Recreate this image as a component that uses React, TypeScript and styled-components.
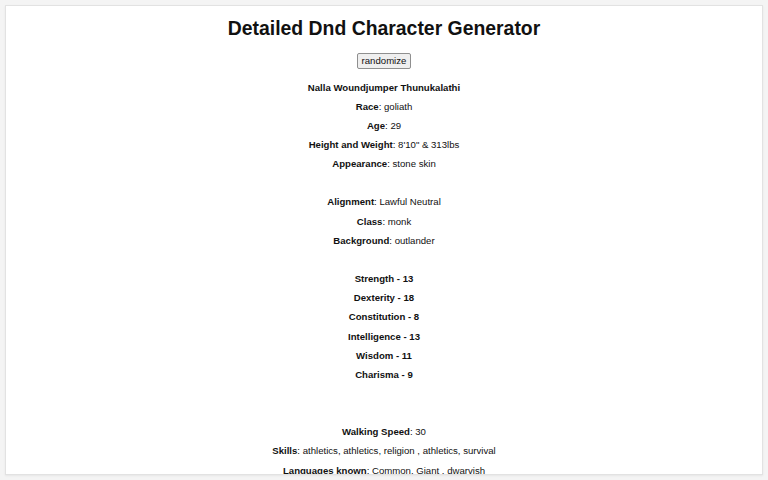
import styled, { createGlobalStyle } from 'styled-components';

const GlobalStyle = createGlobalStyle`
  html, body {
    margin: 0;
    padding: 0;
    background: #f4f4f4;
    font-family: "Liberation Sans", Arial, sans-serif;
    color: #111;
  }
`;

type Row = { label: string; value?: string } | null;

const character: Row[] = [
  { label: 'Nalla Woundjumper Thunukalathi' },
  { label: 'Race', value: 'goliath' },
  { label: 'Age', value: '29' },
  { label: 'Height and Weight', value: '8\'10" & 313lbs' },
  { label: 'Appearance', value: 'stone skin' },
  null,
  { label: 'Alignment', value: 'Lawful Neutral' },
  { label: 'Class', value: 'monk' },
  { label: 'Background', value: 'outlander' },
  null,
  { label: 'Strength - 13' },
  { label: 'Dexterity - 18' },
  { label: 'Constitution - 8' },
  { label: 'Intelligence - 13' },
  { label: 'Wisdom - 11' },
  { label: 'Charisma - 9' },
  null,
  null,
  { label: 'Walking Speed', value: '30' },
  { label: 'Skills', value: 'athletics, athletics, religion , athletics, survival' },
  { label: 'Languages known', value: 'Common, Giant , dwarvish' },
];

export default function App() {
  return (
    <>
      <GlobalStyle />
      <Page>
        <Card>
          <Title>Detailed Dnd Character Generator</Title>
          <Randomize>randomize</Randomize>
          <Sheet>
            {character.map((row, i) =>
              row ? (
                <Line key={i}>
                  <b>{row.label}</b>
                  {row.value !== undefined && <>: {row.value}</>}
                </Line>
              ) : (
                <Line key={i}>&nbsp;</Line>
              )
            )}
          </Sheet>
        </Card>
      </Page>
    </>
  );
}

const Page = styled.main`
  padding: 5px;
  height: 100vh;
  box-sizing: border-box;
`;

const Card = styled.section`
  background: #fff;
  height: 100%;
  box-sizing: border-box;
  border: 1px solid #e2e2e2;
  box-shadow: 0 1px 2px rgba(0, 0, 0, 0.06);
  overflow: hidden;
  display: flex;
  flex-direction: column;
  align-items: center;
`;

const Title = styled.h1`
  font-size: 19.4px;
  font-weight: bold;
  margin: 10px 0 13px;
  line-height: 24px;
`;

const Randomize = styled.button`
  font-family: "Liberation Sans", Arial, sans-serif;
  font-size: 9.6px;
  padding: 1px 4px;
  background: #efefef;
  border: 1px solid #8f8f8f;
  border-radius: 2px;
  color: #111;
  line-height: 12px;
`;

const Sheet = styled.div`
  margin-top: 8.5px;
  text-align: center;
`;

const Line = styled.div`
  font-size: 9.6px;
  line-height: 19.15px;
`;
